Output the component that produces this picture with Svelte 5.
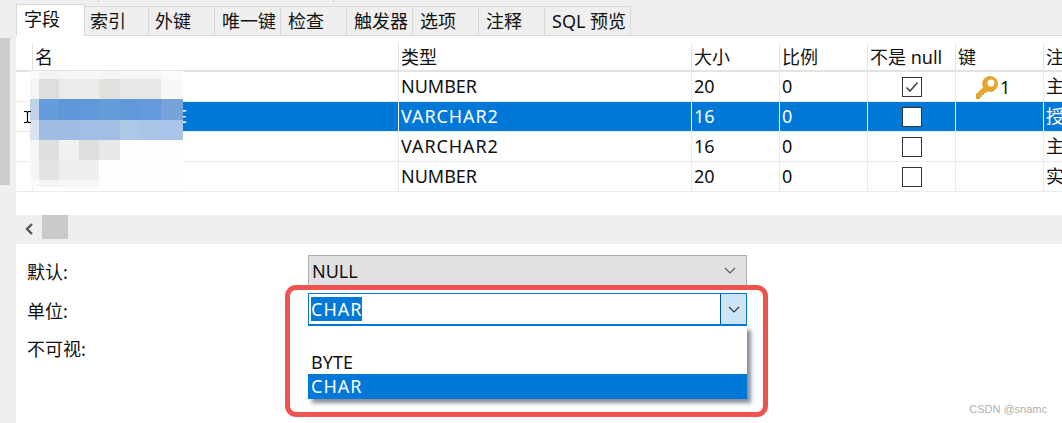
<script>
  const tabs = [
    { label: '字段', w: 69, pad: 7, active: true },
    { label: '索引', w: 64, pad: 5 },
    { label: '外键', w: 66, pad: 6 },
    { label: '唯一键', w: 66, pad: 7 },
    { label: '检查', w: 66, pad: 7 },
    { label: '触发器', w: 66, pad: 7 },
    { label: '选项', w: 66, pad: 7 },
    { label: '注释', w: 66, pad: 7 },
    { label: 'SQL 预览', w: 86, pad: 7 }
  ]

  const rows = [
    { name: '', pad: 2, type: 'NUMBER', size: '20', scale: '0', checked: true, key: true, note: '主' },
    { name: 'E', pad: 144, type: 'VARCHAR2', size: '16', scale: '0', selected: true, note: '授' },
    { name: '', pad: 2, type: 'VARCHAR2', size: '16', scale: '0', note: '主' },
    { name: '_', pad: 35, type: 'NUMBER', size: '20', scale: '0', note: '实' }
  ]

  // the pixelated patch over the name column
  const mosaic = [
    ['#fafafa', '#f3f5f4', '#f6f6f6', '#f7f7f7', '#f6f6f4', '#f8f8f8', '#f8f8f8', '#fbfbfb'],
    ['#f5f5f3', '#dedede', '#ebebeb', '#ececec', '#e1e2de', '#e7e7e7', '#e7e7e7', '#f8f8f8'],
    ['#c0d2ea', '#659cdc', '#5f98d9', '#6198da', '#639cd8', '#6098da', '#6499dc', '#77a3d9'],
    ['#dae4f1', '#a0bee3', '#a1bde4', '#a2bee4', '#a2bee3', '#adc8e6', '#a9c4e6', '#aac3e8'],
    ['#f6f6f6', '#dfdfdf', '#f1f1ef', '#dededc', '#e8e8e8', '#fefefe', '#fefefe', '#fefefe'],
    ['#f6f6f6', '#e3e3e3', '#eeeeee', '#efefef', '#fefefe', '#fefefe', '#fefefe', '#fefefe'],
    ['#fafafa', '#f4f4f4', '#f5f5f5', '#f6f6f6', '#fefefe', '#fefefe', '#fefefe', '#fefefe']
  ]
</script>

<div class="page">
  <aside class="side"><div class="thumb"></div></aside>

  <main class="main">
    <div class="tabs">
      {#each tabs as tab}
        <div class="tab" class:active={tab.active} style="width: {tab.w}px; padding-left: {tab.pad}px">{tab.label}</div>
      {/each}
    </div>

    <div class="grid">
      <div class="gutter head"></div>
      <div class="head"><span>名</span></div>
      <div class="head"><span>类型</span></div>
      <div class="head"><span>大小</span></div>
      <div class="head"><span>比例</span></div>
      <div class="head"><span>不是 null</span></div>
      <div class="head"><span>键</span></div>
      <div class="head"><span>注</span></div>

      {#each rows as row}
        <div class="gutter cell" class:sel={row.selected}></div>
        <div class="cell" class:sel={row.selected} style="padding-left: {row.pad}px">{row.name}</div>
        <div class="cell" class:sel={row.selected} class:wide={row.type === 'VARCHAR2'}>{row.type}</div>
        <div class="cell" class:sel={row.selected}>{row.size}</div>
        <div class="cell" class:sel={row.selected}>{row.scale}</div>
        <div class="cell center" class:sel={row.selected}>
          <span class="check">
            {#if row.checked}
              <svg width="14" height="12" viewBox="0 0 14 12"><path d="M1.5 6.5 5 10 12.5 1.5" fill="none" stroke="#444" stroke-width="1.6"/></svg>
            {/if}
          </span>
        </div>
        <div class="cell keycell" class:sel={row.selected}>
          {#if row.key}
            <svg class="key" width="22" height="23" viewBox="0 0 22 23">
              <path fill="#e8a52e" fill-rule="evenodd" d="M14 0a8 8 0 1 1-2.500 15.600L10 17H8v2H6v2H4v2H0v-5l7-6.500A8 8 0 0 1 14 0Zm1 3.500a3.500 3.500 0 1 0 0 7 3.500 3.500 0 0 0 0-7Z"/>
            </svg>
            <span>1</span>
          {/if}
        </div>
        <div class="cell" class:sel={row.selected}>{row.note}</div>
      {/each}
    </div>

    <div class="hscroll">
      <svg class="arrow" width="10" height="12" viewBox="0 0 10 12"><path d="M8 1 3 6l5 5" fill="none" stroke="#555" stroke-width="2.400"/></svg>
      <div class="hthumb"></div>
    </div>

    <div class="form">
      <div class="line first">
        <label>默认:</label>
        <div class="combo plain">
          <span>NULL</span>
          <svg width="12" height="7" viewBox="0 0 12 7"><path d="M1 1l5 5 5-5" fill="none" stroke="#555" stroke-width="1.100"/></svg>
        </div>
      </div>
      <div class="line second">
        <label>单位:</label>
        <div class="combo open">
          <span class="picked">CHAR</span>
          <div class="drop">
            <svg width="12" height="7" viewBox="0 0 12 7"><path d="M1 1l5 5 5-5" fill="none" stroke="#333" stroke-width="1.100"/></svg>
          </div>
          <ul class="list">
            <li></li>
            <li>BYTE</li>
            <li class="on">CHAR</li>
          </ul>
        </div>
      </div>
      <div class="line last">
        <label>不可视:</label>
      </div>
    </div>
  </main>

  <!-- mosaic and annotation sit on top of the screenshot -->
  <div class="mosaic">
    {#each mosaic as cells}
      {#each cells as color}
        <i style="background: {color}"></i>
      {/each}
    {/each}
  </div>
  <svg class="cursor" width="7" height="12" viewBox="0 0 7 12"><path d="M0 .5h2.500L3.500 1.500 4.500.5H7M3.500 1.500v9M0 11.500h2.500l1-1 1 1H7" fill="none" stroke="#000" stroke-width="1.200"/></svg>
  <i class="tick one"></i>
  <i class="tick two"></i>
  <div class="redbox"></div>
  <div class="mark">CSDN @snamc</div>
</div>

<style>
  :global(body) {
    margin: 0;
    background: #fff;
  }
  .page {
    position: relative;
    display: flex;
    width: 1062px;
    height: 423px;
    overflow: hidden;
    font-family: "Noto Sans", "Noto Sans CJK SC", sans-serif;
    font-size: 18px;
    color: #111;
  }
  .side {
    width: 16px;
    flex: none;
    background: #efefef;
    padding-top: 38px;
    box-sizing: border-box;
  }
  .thumb {
    width: 10px;
    height: 147px;
    background: #cdcdcd;
  }
  .main {
    flex: 1;
    min-width: 0;
  }

  .tabs {
    display: flex;
    height: 36px;
    box-sizing: border-box;
    padding-top: 6px;
    background: #efefef;
    border-bottom: 1px solid #d9d9d9;
  }
  .tab {
    box-sizing: border-box;
    height: 29px;
    line-height: 28px;
    border: 1px solid #d9d9d9;
    border-left: none;
    border-bottom: none;
    white-space: nowrap;
  }
  .tab.active {
    height: 32px;
    margin-top: -2px;
    line-height: 29px;
    background: #fff;
    border-left: 1px solid #d9d9d9;
    position: relative;
  }

  .grid {
    display: grid;
    grid-template-columns: 16px 366px 293px 88px 88px 88px 88px 19px;
    grid-template-rows: 36px repeat(4, 30px);
    height: 179px;
    align-content: start;
  }
  .head {
    box-sizing: border-box;
    border-bottom: 2px solid #e3e3e3;
    padding-top: 7px;
  }
  .head span {
    display: block;
    height: 100%;
    border-left: 1px solid #e3e3e3;
    padding-left: 2px;
    line-height: 29px;
    white-space: nowrap;
  }
  .cell {
    box-sizing: border-box;
    border-left: 1px solid #ebebeb;
    border-bottom: 1px solid #ebebeb;
    padding-left: 2px;
    line-height: 28px;
    white-space: nowrap;
    overflow: hidden;
  }
  .wide {
    letter-spacing: 0.9px;
  }
  .cell.gutter {
    border-left: none;
  }
  .cell.sel {
    background: #0078d7;
    color: #fff;
    border-left-color: #fff;
    border-bottom-color: #e3f0fa;
  }
  .cell.gutter.sel {
    background: #fff;
    border-bottom-color: #ebebeb;
  }
  .center {
    display: flex;
    justify-content: center;
    align-items: center;
    padding: 0;
  }
  .check {
    box-sizing: border-box;
    width: 20px;
    height: 20px;
    border: 1px solid #333;
    display: flex;
    align-items: center;
    justify-content: center;
  }
  .sel .check {
    background: #fff;
  }
  .keycell {
    display: flex;
    align-items: center;
    padding-left: 20px;
    gap: 2px;
  }
  .key {
    flex: none;
    margin-top: 1px;
  }

  .hscroll {
    display: flex;
    align-items: flex-start;
    height: 29px;
    background: #efefef;
  }
  .arrow {
    margin: 8px 0 0 8px;
  }
  .hthumb {
    width: 26px;
    height: 24px;
    margin-left: 8px;
    background: #c9c9c9;
  }

  .form {
    padding: 11px 0 0 11px;
  }
  .line {
    display: flex;
    margin-bottom: 7px;
  }
  .line label {
    width: 281px;
    flex: none;
    line-height: 34px;
  }
  .line.first {
    height: 31px;
  }
  .line.second label {
    line-height: 37px;
  }
  .line.last {
    margin-top: 5px;
  }
  .line.last label {
    line-height: 24px;
  }
  .combo {
    position: relative;
    box-sizing: border-box;
    width: 439px;
    display: flex;
    align-items: center;
    justify-content: space-between;
  }
  .plain {
    height: 31px;
    background: #e1e1e1;
    border: 1px solid #adadad;
    padding: 0 10px 0 3px;
  }
  .open {
    height: 33px;
    background: #fff;
    border: 1px solid #0078d7;
    border-bottom-width: 2px;
    padding-left: 2px;
  }
  .picked {
    background: #0078d7;
    color: #fff;
    line-height: 24px;
    letter-spacing: 1px;
  }
  .drop {
    box-sizing: border-box;
    width: 26px;
    height: 100%;
    display: flex;
    align-items: center;
    justify-content: center;
    background: #cce4f7;
    border-left: 1px solid #005499;
  }
  .list {
    position: absolute;
    left: -1px;
    right: -1px;
    top: 100%;
    margin: 2px 0 0;
    padding: 0;
    list-style: none;
    background: #fff;
    box-shadow: 4px 4px 4px rgba(40, 50, 70, 0.55);
  }
  .list li {
    height: 24px;
    padding-left: 3px;
    line-height: 24px;
  }
  .list li.on {
    height: 25px;
    background: #0078d7;
    color: #fff;
    letter-spacing: 1px;
  }

  .mosaic {
    position: absolute;
    left: 30px;
    top: 71px;
    display: grid;
    grid-template-columns: 9px 20px 20px 20px 21px 20px 21px 22px;
    grid-template-rows: 8px 20px 21px 20px 20px 20px 7px;
  }
  .cursor {
    position: absolute;
    left: 24px;
    top: 111px;
  }
  .tick {
    position: absolute;
    top: 0;
    width: 1px;
    height: 2px;
    background: #cfcfcf;
  }
  .tick.one {
    left: 98px;
  }
  .tick.two {
    left: 333px;
  }
  .redbox {
    position: absolute;
    left: 285px;
    top: 285px;
    width: 483px;
    height: 132px;
    box-sizing: border-box;
    border: 5px solid #ef5350;
    border-radius: 11px;
  }
  .mark {
    position: absolute;
    right: 15px;
    top: 403px;
    font-family: "Liberation Sans", sans-serif;
    font-size: 11px;
    color: #b0b0b0;
  }
</style>
